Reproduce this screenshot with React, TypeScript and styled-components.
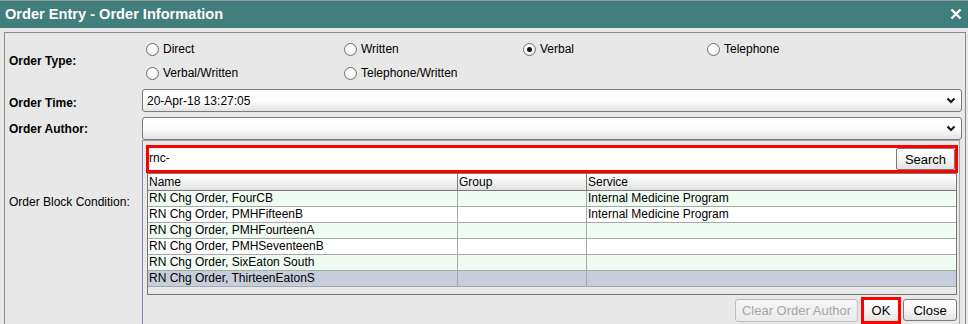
import styled, { createGlobalStyle } from "styled-components";

const GlobalStyle = createGlobalStyle`
  html, body {
    margin: 0;
    padding: 0;
    background: #e8e8e8;
  }
  body {
    font-family: "Liberation Sans", Arial, sans-serif;
    font-size: 12px;
    color: #000;
  }
  * {
    box-sizing: border-box;
  }
`;

const Window = styled.div`
  width: 968px;
  height: 324px;
  overflow: hidden;
  display: flex;
  flex-direction: column;
  background: #e8e8e8;
`;

const TitleBar = styled.div`
  height: 28px;
  flex: none;
  border-top: 1px solid #8c9c9b;
  background: #417e7c;
  color: #fff;
  display: flex;
  align-items: center;
  justify-content: space-between;
  padding: 0 6px 1px 5px;
  font-weight: bold;
  font-size: 14.6px;
`;

const CloseX = styled.svg`
  width: 12px;
  height: 12px;
`;

const Body = styled.div`
  flex: 1;
  min-height: 0;
  padding: 4px 2px 0 4px;
`;

const Panel = styled.div`
  border: 1px solid #8c8c8c;
  border-bottom: none;
  height: 320px;
  display: grid;
  grid-template-columns: 137px 1fr;
  align-content: start;
  padding-right: 3px;
`;

const Label = styled.div<{ $plain?: boolean }>`
  padding-left: 4px;
  font-weight: ${({ $plain }) => ($plain ? "normal" : "bold")};
  align-self: ${({ $plain }) => ($plain ? "start" : "center")};
  padding-top: ${({ $plain }) => ($plain ? "55px" : "0")};
`;

const RadioGrid = styled.div`
  display: grid;
  grid-template-columns: 198px 179px 184px 1fr;
  grid-auto-rows: 24px;
  padding: 4px 0 0 4px;
  margin-bottom: 4px;
`;

const RadioItem = styled.label`
  display: flex;
  align-items: center;
  gap: 4px;
`;

const RadioCircle = styled.span<{ $checked?: boolean }>`
  width: 13px;
  height: 13px;
  border-radius: 50%;
  border: 1px solid #6f6f6f;
  background: radial-gradient(circle at 40% 35%, #ffffff 30%, #e2e2e2 100%);
  display: flex;
  align-items: center;
  justify-content: center;

  &::after {
    content: "";
    display: ${({ $checked }) => ($checked ? "block" : "none")};
    width: 5px;
    height: 5px;
    border-radius: 50%;
    background: #111;
  }
`;

const Select = styled.div<{ $gap: number }>`
  height: 23px;
  margin-bottom: ${({ $gap }) => $gap}px;
  border: 1px solid #7b7b7b;
  border-radius: 3px;
  background: linear-gradient(#ffffff, #fbfbfb 55%, #e4e4e4);
  display: flex;
  align-items: center;
  justify-content: space-between;
  padding: 0 5px 0 4px;
`;

const Chevron = styled.svg`
  width: 10px;
  height: 7px;
`;

const BlockPanel = styled.div`
  border-top: 1px solid #a3a3a3;
  border-left: 1px solid #7b8aa9;
  border-right: 1px solid #a9a9a9;
  margin-right: 2px;
  padding: 4px 1px 0 3px;
  height: 190px;
`;

const SearchBox = styled.div`
  height: 28px;
  border: 3px solid #ff0000;
  background: #fff;
  display: flex;
  align-items: flex-start;
`;

const SearchText = styled.div`
  flex: 1;
  height: 22px;
  line-height: 21px;
  padding-left: 0;
`;

const Button = styled.button<{ $w: number; $h: number; $highlight?: boolean }>`
  width: ${({ $w }) => $w}px;
  height: ${({ $h }) => $h}px;
  flex: none;
  font-family: "Liberation Sans", Arial, sans-serif;
  font-size: 13px;
  color: ${({ disabled }) => (disabled ? "#a6a6a6" : "#000")};
  border: ${({ $highlight, disabled }) =>
    $highlight
      ? "3px solid #ff0000"
      : disabled
      ? "1px solid #bdbdbd"
      : "1px solid #7a7a7a"};
  border-radius: ${({ $highlight }) => ($highlight ? "0" : "3px")};
  background: ${({ disabled }) =>
    disabled
      ? "linear-gradient(#f6f6f6, #ebebeb)"
      : "linear-gradient(#ffffff, #f6f6f6 50%, #e2e2e2)"};
  padding: 0;
  display: flex;
  align-items: center;
  justify-content: center;
`;

const SearchButton = styled(Button)`
  border-radius: 2px;
`;

const Table = styled.div`
  margin: 0 1px 0 1px;
  height: 122px;
  border: 1px solid #777;
  background: #e8e8e8;
`;

const TableRow = styled.div<{ $bg: string; $header?: boolean }>`
  display: grid;
  grid-template-columns: 310px 129px 1fr;
  height: ${({ $header }) => ($header ? "17px" : "16px")};
  background: ${({ $bg }) => $bg};
  border-bottom: 1px solid ${({ $header }) => ($header ? "#7a7a7a" : "#a8a8a8")};
`;

const Cell = styled.div<{ $header?: boolean }>`
  padding-left: 1px;
  line-height: ${({ $header }) => ($header ? "16px" : "15px")};
  white-space: nowrap;
  overflow: hidden;
  border-right: 1px solid ${({ $header }) => ($header ? "#7a7a7a" : "#a8a8a8")};

  &:last-child {
    border-right: none;
  }
`;

const ButtonBar = styled.div`
  display: flex;
  justify-content: flex-end;
  align-items: center;
  margin-top: 1px;
  padding-right: 1px;
  height: 28px;
`;

const radios = [
  { label: "Direct" },
  { label: "Written" },
  { label: "Verbal", checked: true },
  { label: "Telephone" },
  { label: "Verbal/Written" },
  { label: "Telephone/Written" },
];

const rows = [
  { name: "RN Chg Order, FourCB", group: "", service: "Internal Medicine Program" },
  { name: "RN Chg Order, PMHFifteenB", group: "", service: "Internal Medicine Program" },
  { name: "RN Chg Order, PMHFourteenA", group: "", service: "" },
  { name: "RN Chg Order, PMHSeventeenB", group: "", service: "" },
  { name: "RN Chg Order, SixEaton South", group: "", service: "" },
  { name: "RN Chg Order, ThirteenEatonS", group: "", service: "", selected: true },
];

const rowColor = (i: number, selected?: boolean) =>
  selected ? "#c8cddc" : i % 2 === 0 ? "#effcf2" : "#ffffff";

const DownChevron = () => (
  <Chevron viewBox="0 0 10 7">
    <path d="M1.5 1.5 L5 5 L8.5 1.5" fill="none" stroke="#111" strokeWidth="2" />
  </Chevron>
);

const App = () => {
  return (
    <Window>
      <GlobalStyle />
      <TitleBar>
        <span>Order Entry - Order Information</span>
        <CloseX viewBox="0 0 12 12">
          <path d="M1.5 1.5 L10.5 10.5 M10.5 1.5 L1.5 10.5" stroke="#fff" strokeWidth="2.4" />
        </CloseX>
      </TitleBar>
      <Body>
        <Panel>
          <Label>Order Type:</Label>
          <RadioGrid>
            {radios.map((r) => (
              <RadioItem key={r.label}>
                <RadioCircle $checked={r.checked} />
                {r.label}
              </RadioItem>
            ))}
          </RadioGrid>

          <Label>Order Time:</Label>
          <Select $gap={5}>
            <span>20-Apr-18 13:27:05</span>
            <DownChevron />
          </Select>

          <Label>Order Author:</Label>
          <Select $gap={0}>
            <span />
            <DownChevron />
          </Select>

          <Label $plain>Order Block Condition:</Label>
          <BlockPanel>
            <SearchBox>
              <SearchText>rnc-</SearchText>
              <SearchButton $w={59} $h={22}>
                Search
              </SearchButton>
            </SearchBox>
            <Table>
              <TableRow $header $bg="linear-gradient(#ffffff, #f3f3f3 50%, #e0e0e0)">
                <Cell $header>Name</Cell>
                <Cell $header>Group</Cell>
                <Cell $header>Service</Cell>
              </TableRow>
              {rows.map((row, i) => (
                <TableRow key={row.name} $bg={rowColor(i, row.selected)}>
                  <Cell>{row.name}</Cell>
                  <Cell>{row.group}</Cell>
                  <Cell>{row.service}</Cell>
                </TableRow>
              ))}
            </Table>
            <ButtonBar>
              <Button $w={123} $h={23} disabled>
                Clear Order Author
              </Button>
              <Button $w={40} $h={27} $highlight style={{ marginLeft: 3 }}>
                OK
              </Button>
              <Button $w={54} $h={22} style={{ marginLeft: 2 }}>
                Close
              </Button>
            </ButtonBar>
          </BlockPanel>
        </Panel>
      </Body>
    </Window>
  );
};

export default App;
